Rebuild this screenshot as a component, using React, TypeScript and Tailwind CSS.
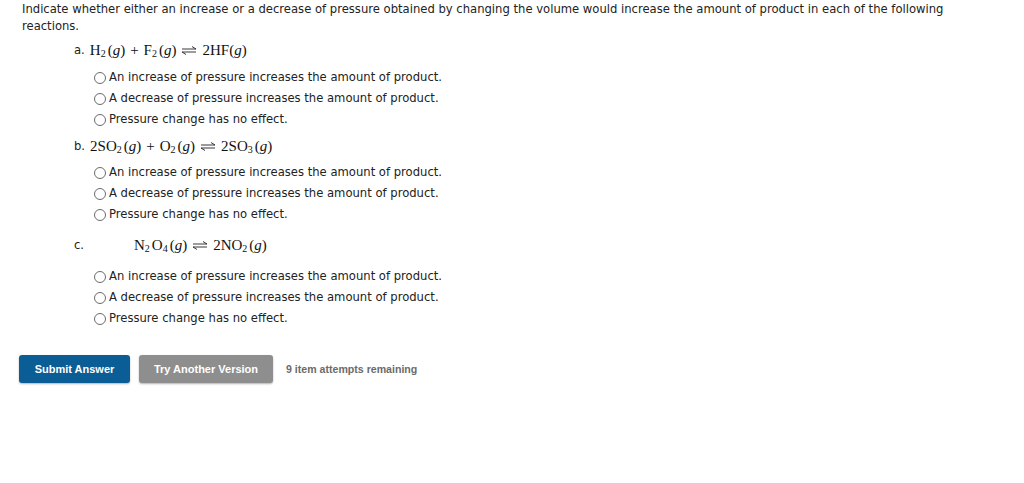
import React from 'react';

const options = [
  'An increase of pressure increases the amount of product.',
  'A decrease of pressure increases the amount of product.',
  'Pressure change has no effect.',
];

function Sub({ children }: { children: React.ReactNode }) {
  return <span className="text-[10px] relative top-[3px] mr-[2px]">{children}</span>;
}

function G() {
  return (
    <span>
      (<i>g</i>)
    </span>
  );
}

// equilibrium harpoons
function Eq() {
  return (
    <svg width="16" height="9" viewBox="0 0 16 9" className="mx-[5px] inline-block">
      <path d="M1 3h14M11 0.5L15 3" stroke="#222" strokeWidth="0.9" fill="none" />
      <path d="M15 6H1M5 8.5L1 6" stroke="#222" strokeWidth="0.9" fill="none" />
    </svg>
  );
}

function Plus() {
  return <span className="mx-[5px]">+</span>;
}

function Radio({ label }: { label: string }) {
  return (
    <label className="flex items-center h-[21px] cursor-pointer">
      <span className="w-[12px] h-[12px] rounded-full border border-[#6b6b6b] bg-white mr-[3px]" />
      <span>{label}</span>
    </label>
  );
}

function Options({ className }: { className: string }) {
  return (
    <div className={`pl-[72px] ${className}`}>
      {options.map((o) => (
        <Radio key={o} label={o} />
      ))}
    </div>
  );
}

const mathCls = "flex items-center font-['Liberation_Serif','DejaVu_Serif',serif] text-[15px] text-[#111]";

export default function App() {
  return (
    <div className="w-[1024px] h-[483px] bg-white text-[#222] text-[11.6px] leading-[17px] font-['DejaVu_Sans','Verdana',sans-serif] px-[22px] pt-[1px]">
      <p>
        Indicate whether either an increase or a decrease of pressure obtained by changing the volume would increase the amount of product in each of the following reactions.
      </p>

      {/* a */}
      <div className="mt-[7px] flex items-center pl-[52px] h-[17px]">
        <span className="mr-[5px]">a.</span>
        <span className={mathCls}>
          H<Sub>2</Sub>
          <G />
          <Plus />F<Sub>2</Sub>
          <G />
          <Eq />
          2HF
          <G />
        </span>
      </div>
      <Options className="mt-[8px]" />

      {/* b */}
      <div className="mt-[8px] flex items-center pl-[52px] h-[17px]">
        <span className="mr-[5px]">b.</span>
        <span className={mathCls}>
          2SO<Sub>2</Sub>
          <G />
          <Plus />O<Sub>2</Sub>
          <G />
          <Eq />
          2SO<Sub>3</Sub>
          <G />
        </span>
      </div>
      <Options className="mt-[7px]" />

      {/* c */}
      <div className="mt-[12px] flex items-center pl-[52px] h-[17px]">
        <span className="w-[60px]">c.</span>
        <span className={mathCls}>
          N<Sub>2</Sub>O<Sub>4</Sub>
          <G />
          <Eq />
          2NO<Sub>2</Sub>
          <G />
        </span>
      </div>
      <Options className="mt-[12px]" />

      <div className="flex items-center mt-[26px] -ml-[3px] font-['Liberation_Sans',Arial,sans-serif] font-bold">
        <button className="w-[111px] h-[28px] rounded-[3px] bg-[#0b5d96] text-white text-[11px] shadow-[0_1px_2px_rgba(0,0,0,0.3)]">
          Submit Answer
        </button>
        <button className="ml-[9px] w-[134px] h-[28px] rounded-[3px] bg-[#8e8e8e] text-white text-[11px] shadow-[0_1px_2px_rgba(0,0,0,0.3)]">
          Try Another Version
        </button>
        <span className="ml-[13px] text-[10.6px] text-[#6b6b6b]">9 item attempts remaining</span>
      </div>
    </div>
  );
}
